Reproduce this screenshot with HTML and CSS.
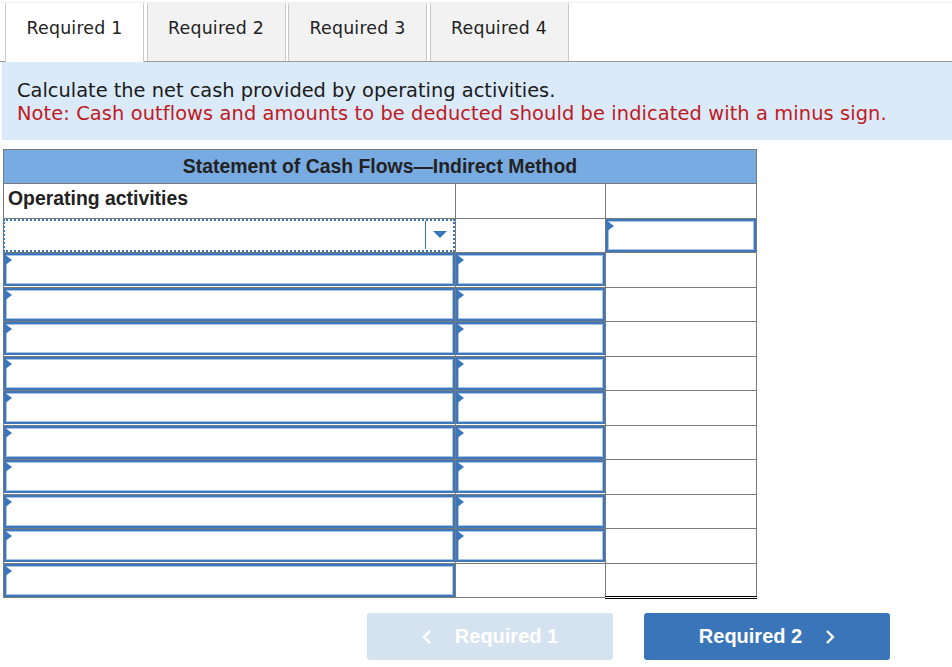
FILE: index.html
```html
<!DOCTYPE html>
<html>
<head>
<meta charset="utf-8">
<link rel="stylesheet" href="styles.css">
</head>
<body>
<div class="tabs">
  <div class="tab active">Required 1</div>
  <div class="tab">Required 2</div>
  <div class="tab">Required 3</div>
  <div class="tab">Required 4</div>
</div>
<div class="instructions">
  <div class="line">Calculate the net cash provided by operating activities.</div>
  <div class="line note">Note: Cash outflows and amounts to be deducted should be indicated with a minus sign.</div>
</div>
<table class="sheet">
  <colgroup><col class="c1"><col class="c2"><col class="c3"></colgroup>
  <tr class="head"><th colspan="3">Statement of Cash Flows—Indirect Method</th></tr>
  <tr><td class="label">Operating activities</td><td></td><td></td></tr>
  <tr>
    <td><div class="select"><span class="arrow"><svg width="14" height="7" viewBox="0 0 14 7"><path d="M0 0H14L7 7Z" fill="#3a76bb"/></svg></span></div></td>
    <td></td>
    <td><div class="input"><i class="tri"></i></div></td>
  </tr>
  <tr><td><div class="input"><i class="tri"></i></div></td><td><div class="input"><i class="tri"></i></div></td><td></td></tr>
  <tr><td><div class="input"><i class="tri"></i></div></td><td><div class="input"><i class="tri"></i></div></td><td></td></tr>
  <tr><td><div class="input"><i class="tri"></i></div></td><td><div class="input"><i class="tri"></i></div></td><td></td></tr>
  <tr><td><div class="input"><i class="tri"></i></div></td><td><div class="input"><i class="tri"></i></div></td><td></td></tr>
  <tr><td><div class="input"><i class="tri"></i></div></td><td><div class="input"><i class="tri"></i></div></td><td></td></tr>
  <tr><td><div class="input"><i class="tri"></i></div></td><td><div class="input"><i class="tri"></i></div></td><td></td></tr>
  <tr><td><div class="input"><i class="tri"></i></div></td><td><div class="input"><i class="tri"></i></div></td><td></td></tr>
  <tr><td><div class="input"><i class="tri"></i></div></td><td><div class="input"><i class="tri"></i></div></td><td></td></tr>
  <tr><td><div class="input"><i class="tri"></i></div></td><td><div class="input"><i class="tri"></i></div></td><td></td></tr>
  <tr class="total"><td><div class="input"><i class="tri"></i></div></td><td></td><td class="sum"></td></tr>
</table>
<div class="nav">
  <button class="btn disabled"><svg class="chev" width="10" height="16" viewBox="0 0 10 16"><path d="M8 2L2 8L8 14" fill="none" stroke="#fff" stroke-width="2.4"/></svg><span>Required 1</span></button>
  <button class="btn primary"><span>Required 2</span><svg class="chev" width="10" height="16" viewBox="0 0 10 16"><path d="M2 2L8 8L2 14" fill="none" stroke="#fff" stroke-width="2.4"/></svg></button>
</div>
</body>
</html>
```
FILE: styles.css
```css
html, body {
  margin: 0;
  padding: 0;
  background: #fff;
}
body {
  width: 952px;
  font-family: "DejaVu Sans", Verdana, sans-serif;
}
.tabs {
  display: flex;
  gap: 2.5px;
  margin-top: 2px;
  border-top: 1px solid #f0f0f0;
  border-bottom: 1px solid #9a9a9a;
  padding-left: 5px;
  height: 58px;
}
.tab {
  box-sizing: border-box;
  width: 139px;
  height: 58px;
  background: #f2f2f2;
  border: 1px solid #c8c8c8;
  border-bottom: none;
  border-top-color: #f2f2f2;
  display: flex;
  align-items: center;
  justify-content: center;
  font-size: 17.4px;
  letter-spacing: 0.2px;
  color: #222;
  padding-bottom: 9px;
}
.tab.active {
  background: #fff;
  height: 59px;
  border-top-color: #fff;
  margin-bottom: -1px;
  padding-bottom: 10px;
}
.instructions {
  margin-left: 2px;
  height: 78px;
  box-sizing: border-box;
  background: #daeaf8;
  padding: 17px 0 0 15px;
  font-size: 19.4px;
  line-height: 23px;
  color: #1a1a1a;
}
.note {
  color: #c0191d;
  letter-spacing: 0.1px;
}
.sheet {
  margin: 9px 0 0 3px;
  border-collapse: collapse;
  table-layout: fixed;
  width: 753px;
  font-family: "Liberation Sans", Arial, sans-serif;
}
.c1 { width: 452px; }
.c2 { width: 150px; }
.c3 { width: 151px; }
.sheet th, .sheet td {
  border: 1px solid #7a7a7a;
  padding: 0;
  height: 34.5px;
  box-sizing: border-box;
}
.sheet tr.head th {
  background: #79abe3;
  font-size: 19.4px;
  font-weight: bold;
  color: #222;
  text-align: center;
  height: 34px;
}
.sheet td.label {
  font-size: 19.4px;
  font-weight: bold;
  color: #222;
  padding-left: 4px;
  vertical-align: top;
  padding-top: 3px;
}
.input {
  position: relative;
  box-sizing: border-box;
  height: 33px;
  border: 2px solid #3f77bb;
  box-shadow: inset 0 0 0 1px #a6c3e6;
  background: #fff;
}
.tri {
  position: absolute;
  left: -2px;
  top: -1px;
  width: 0;
  height: 0;
  border-top: 6px solid transparent;
  border-bottom: 6px solid transparent;
  border-left: 8px solid #3a76bb;
}
.select {
  position: relative;
  box-sizing: border-box;
  height: 33px;
  border: 2px dotted #3a76bb;
  margin-left: -1px;
}
.select .arrow {
  position: absolute;
  right: 0;
  top: 0;
  bottom: 1px;
  width: 27px;
  border-left: 1px solid #3a76bb;
  display: flex;
  align-items: center;
  justify-content: center;
}
.sheet tr.total td.sum {
  border-top: 1px solid #000;
  border-bottom: 3px double #000;
}
.nav {
  display: flex;
  justify-content: flex-end;
  gap: 31px;
  padding-right: 62px;
  margin-top: 14px;
}
.btn {
  box-sizing: border-box;
  width: 246px;
  height: 47px;
  border: none;
  border-radius: 3px;
  display: flex;
  align-items: center;
  justify-content: center;
  gap: 23px;
  font-family: "Liberation Sans", Arial, sans-serif;
  font-size: 20px;
  font-weight: bold;
  color: #fff;
  padding: 0;
}
.btn.disabled {
  background: #d5e2f0;
}
.btn.primary {
  background: #3a75ba;
}
```
